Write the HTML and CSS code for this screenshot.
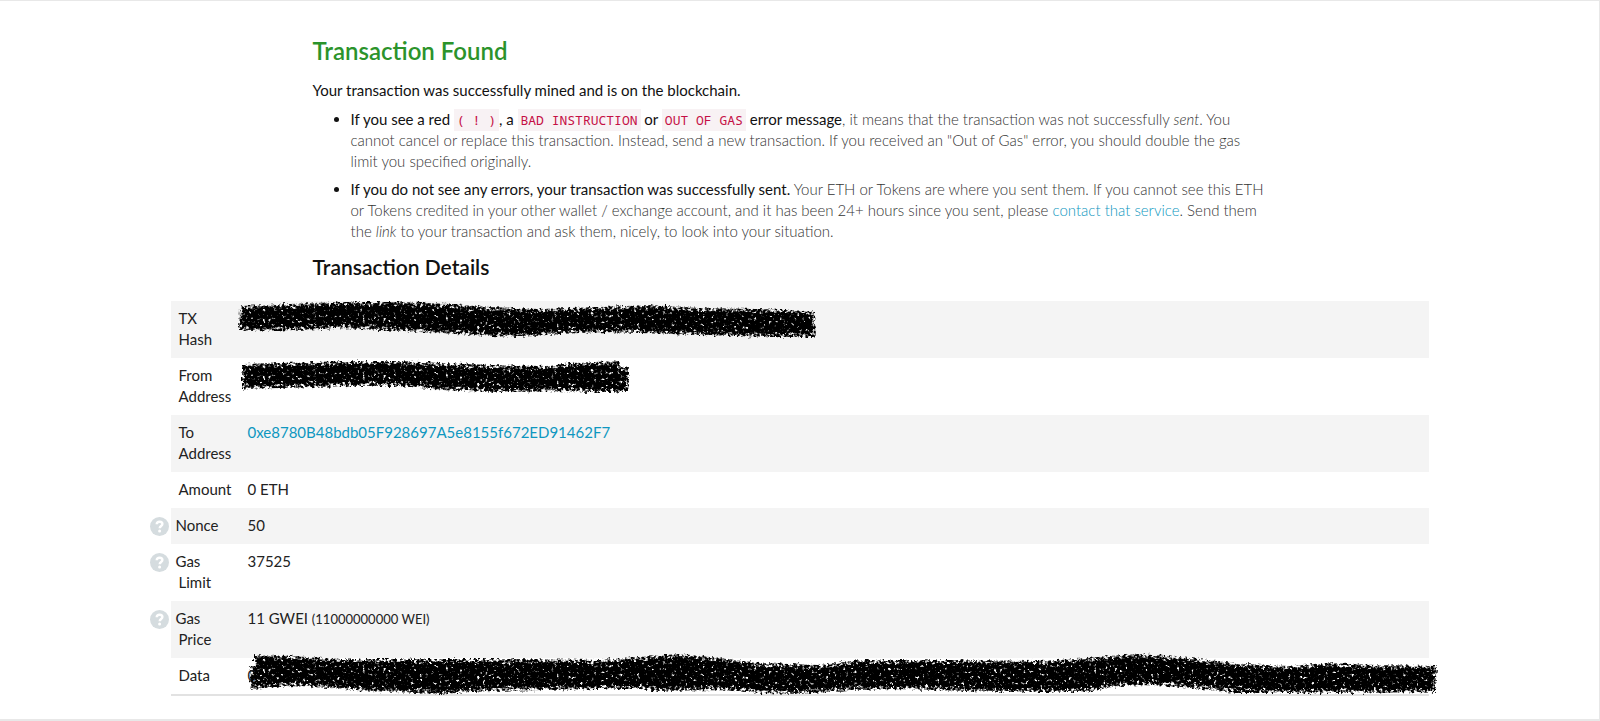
FILE: index.html
```html
<!DOCTYPE html>
<html lang="en">
<head>
    <meta charset="UTF-8">
    <meta name="viewport" content="width=device-width, initial-scale=1.0">
    <title>Transaction Found</title>
    <link rel="stylesheet" href="styles.css">
</head>
<body>
    <!-- shared brush filters and help icon -->
    <svg class="defs" aria-hidden="true">
        <defs>
            <filter id="rough" x="-2%" y="-30%" width="104%" height="160%" color-interpolation-filters="sRGB">
                <feTurbulence type="fractalNoise" baseFrequency="0.35" numOctaves="2" seed="4" result="noise"/>
                <feDisplacementMap in="SourceGraphic" in2="noise" scale="6" xChannelSelector="R" yChannelSelector="G" result="edge"/>
                <feColorMatrix in="noise" type="matrix" values="0 0 0 0 0  0 0 0 0 0  0 0 0 0 0  0 0 4 0 -1.3" result="grain"/>
                <feComposite in="edge" in2="grain" operator="in"/>
                <feGaussianBlur stdDeviation="0.5"/>
            </filter>
            <filter id="specks" x="-2%" y="-30%" width="104%" height="160%" color-interpolation-filters="sRGB">
                <feTurbulence type="fractalNoise" baseFrequency="0.35" numOctaves="2" seed="9" result="noise"/>
                <feMorphology in="SourceGraphic" operator="erode" radius="2" result="core"/>
                <feDisplacementMap in="core" in2="noise" scale="8" xChannelSelector="R" yChannelSelector="G" result="edge"/>
                <feColorMatrix in="noise" type="matrix" values="0 0 0 0 0  0 0 0 0 0  0 0 0 0 0  0 0 7 0 -2" result="grain"/>
                <feComposite in="edge" in2="grain" operator="in"/>
                <feGaussianBlur stdDeviation="0.4"/>
            </filter>
            <symbol id="help" viewBox="0 0 19 19">
                <circle cx="9.5" cy="9.5" r="9.5" fill="#d5dcdf"/>
                <path d="M6.7 7.3C6.8 5.6 8 4.8 9.6 4.8c1.6 0 2.8.9 2.8 2.3 0 1.9-2.7 2-2.7 4.1" fill="none" stroke="#fff" stroke-width="2.4"/>
                <circle cx="9.6" cy="14" r="1.5" fill="#fff"/>
            </symbol>
        </defs>
    </svg>

    <main class="page">
        <section class="intro">
            <h1>Transaction Found</h1>
            <p>Your transaction was successfully mined and is on the blockchain.</p>
            <ul>
                <li><strong>If you see a red <code>( ! )</code>, a <code>BAD INSTRUCTION</code> or <code>OUT OF GAS</code> error message</strong>, it means that the transaction was not successfully <em>sent</em>. You cannot cancel or replace this transaction. Instead, send a new transaction. If you received an "Out of Gas" error, you should double the gas limit you specified originally.</li>
                <li><strong>If you do not see any errors, your transaction was successfully sent.</strong> Your ETH or Tokens are where you sent them. If you cannot see this ETH or Tokens credited in your other wallet / exchange account, and it has been 24+ hours since you sent, please <a href="#">contact that service</a>. Send them the <em>link</em> to your transaction and ask them, nicely, to look into your situation.</li>
            </ul>
            <h2>Transaction Details</h2>
        </section>

        <table class="details">
            <tbody>
                <tr>
                    <th scope="row">TX Hash</th>
                    <td>
                        <svg class="scribble" width="580" height="42" aria-hidden="true">
                            <path class="brush-edge" d="M1 6 50 4 100 2 160 2 210 4 250 7 300 9 360 7 410 5 460 8 520 9 573 11 575 35 530 35 460 33 400 31 360 30 320 32 280 35 250 34 200 31 160 29 100 26 60 28 0 29Z"/>
                            <path class="brush-core" d="M1 6 50 4 100 2 160 2 210 4 250 7 300 9 360 7 410 5 460 8 520 9 573 11 575 35 530 35 460 33 400 31 360 30 320 32 280 35 250 34 200 31 160 29 100 26 60 28 0 29Z"/>
                        </svg>
                    </td>
                </tr>
                <tr>
                    <th scope="row">From Address</th>
                    <td>
                        <svg class="scribble" width="400" height="42" aria-hidden="true">
                            <path class="brush-edge" d="M3 7 40 6 110 4 160 4 200 6 250 8 310 9 330 6 378 4 380 9 388 11 388 33 350 33 320 32 280 33 250 33 200 31 160 27 110 27 40 29 3 30Z"/>
                            <path class="brush-core" d="M3 7 40 6 110 4 160 4 200 6 250 8 310 9 330 6 378 4 380 9 388 11 388 33 350 33 320 32 280 33 250 33 200 31 160 27 110 27 40 29 3 30Z"/>
                        </svg>
                    </td>
                </tr>
                <tr>
                    <th scope="row">To Address</th>
                    <td><a href="#">0xe8780B48bdb05F928697A5e8155f672ED91462F7</a></td>
                </tr>
                <tr>
                    <th scope="row">Amount</th>
                    <td>0 ETH</td>
                </tr>
                <tr>
                    <th scope="row"><span class="label"><a class="help" href="#" aria-label="Help"><svg><use href="#help"/></svg></a>Nonce</span></th>
                    <td>50</td>
                </tr>
                <tr>
                    <th scope="row"><span class="label"><a class="help" href="#" aria-label="Help"><svg><use href="#help"/></svg></a>Gas</span> Limit</th>
                    <td>37525</td>
                </tr>
                <tr>
                    <th scope="row"><span class="label"><a class="help" href="#" aria-label="Help"><svg><use href="#help"/></svg></a>Gas</span> Price</th>
                    <td>11 GWEI <small>(11000000000 WEI)</small></td>
                </tr>
                <tr>
                    <th scope="row">Data</th>
                    <td>0
                        <svg class="scribble scribble-data" width="1204" height="46" aria-hidden="true">
                            <path class="brush-edge" d="M10 16 15 15 15 5 50 6 100 9 250 9 360 10 400 7 440 4 470 7 520 13 580 15 620 10 710 10 800 11 836 9 870 6 900 4 950 8 1003 14 1050 16 1086 13 1136 15 1196 16 1194 40 1103 41 996 41 954 36 914 33 878 34 846 40 760 40 660 37 610 38 560 42 520 41 480 38 420 39 400 37 360 37 250 39 200 42 130 39 90 36 50 34 12 37Z"/>
                            <path class="brush-core" d="M10 16 15 15 15 5 50 6 100 9 250 9 360 10 400 7 440 4 470 7 520 13 580 15 620 10 710 10 800 11 836 9 870 6 900 4 950 8 1003 14 1050 16 1086 13 1136 15 1196 16 1194 40 1103 41 996 41 954 36 914 33 878 34 846 40 760 40 660 37 610 38 560 42 520 41 480 38 420 39 400 37 360 37 250 39 200 42 130 39 90 36 50 34 12 37Z"/>
                        </svg>
                    </td>
                </tr>
            </tbody>
        </table>
    </main>
</body>
</html>
```
FILE: styles.css
```css
* {
    box-sizing: border-box;
}

body {
    margin: 0;
    font-family: Lato, "Open Sans", sans-serif;
    font-size: 15px;
    font-weight: 400;
    line-height: 21px;
    color: #222;
    background: #fff;
}

a {
    color: #0e97c0;
    text-decoration: none;
}

.defs {
    position: absolute;
    width: 0;
    height: 0;
}

.page {
    min-height: 100vh;
    padding: 36px 24px 20px;
    border: 1px solid #e8e8e8;
    border-width: 1px 1px 2px 0;
}

/* Intro text */
.intro {
    max-width: 974px;
    margin: 0 auto;
}

h1,
h2 {
    margin: 0;
    font-weight: 600;
}

h1 {
    margin-bottom: 14px;
    font-size: 24px;
    line-height: 28px;
    color: #2b932b;
}

h2 {
    font-size: 21px;
    line-height: 28px;
    color: #111;
}

p {
    margin: 0;
    padding: 1px 0;
    color: #111;
}

ul {
    margin: 7px 0 11px;
    padding: 0 22px 0 38px;
}

li {
    margin-bottom: 7px;
    font-weight: 300;
    color: #333;
}

li::marker {
    color: #111;
}

strong {
    font-weight: 400;
    color: #111;
}

code {
    padding: 2px 3px;
    font-family: "Noto Sans Mono", "Liberation Mono", monospace;
    font-size: 13px;
    line-height: 16px;
    color: #c50f45;
    background: #f8f2f4;
}

/* Details table */
.details {
    width: 100%;
    max-width: 1258px;
    margin: 20px auto 0;
    border-collapse: separate;
    border-spacing: 0;
    border-bottom: 2px solid #e2e2e2;
}

.details tr:nth-child(odd) {
    background: #f4f4f4;
}

.details th,
.details td {
    padding: 7px 8px 8px;
    text-align: left;
    vertical-align: top;
    font-weight: 400;
}

.details td {
    position: relative;
    width: 100%;
}

small {
    font-size: 13px;
}

.label {
    white-space: nowrap;
}

.help {
    display: inline-block;
    height: 19px;
    margin: 2px 7px 0 -29px;
    vertical-align: top;
}

.help svg {
    display: block;
    width: 19px;
    height: 19px;
}

/* Brush strokes over private values */
.scribble {
    position: absolute;
    top: 0;
    left: 1px;
    overflow: visible;
}

.scribble-data {
    top: -7px;
}

.brush-edge {
    fill: #000;
    stroke: #000;
    stroke-width: 2;
    filter: url(#rough);
}

.brush-core {
    fill: #000;
    stroke: none;
    filter: url(#specks);
}
```
